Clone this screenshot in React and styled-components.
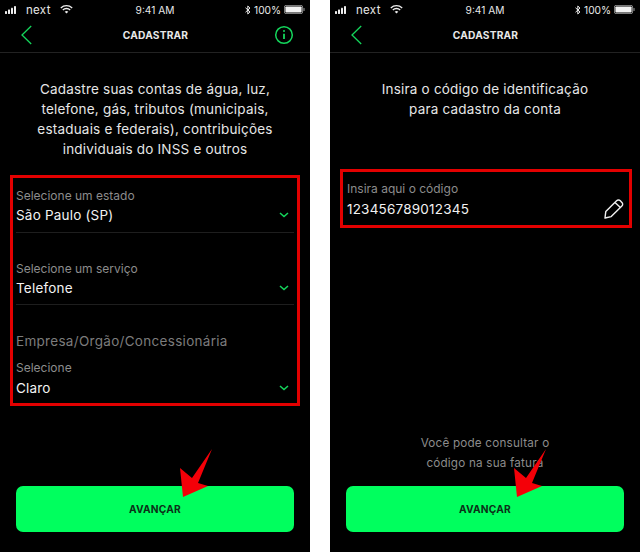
import React from 'react'
import styled, { createGlobalStyle } from 'styled-components'

const GlobalStyle = createGlobalStyle`
  html, body { margin: 0; padding: 0; background: #fff; }
  body { font-family: Inter, "Noto Sans", "Liberation Sans", sans-serif; }
`

const Page = styled.div`
  width: 640px;
  height: 552px;
  display: flex;
  justify-content: space-between;
  overflow: hidden;
`

const Screen = styled.div`
  position: relative;
  width: 310px;
  height: 552px;
  background: #000;
  color: #fff;
  display: flex;
  flex-direction: column;
`

const StatusBar = styled.div`
  height: 18px;
  box-sizing: border-box;
  padding: 1px 5px 0;
  display: flex;
  align-items: center;
  font-size: 10.2px;
  color: #e8e8e8;
`

const StatusLeft = styled.div`
  flex: 1;
  display: flex;
  align-items: center;
  gap: 5px;
`

const Carrier = styled.span`
  font-size: 11.5px;
  letter-spacing: 0.3px;
  margin: 0 4px 0 5px;
`

const Clock = styled.span`
  width: 60px;
  text-align: center;
`

const StatusRight = styled.div`
  flex: 1;
  display: flex;
  align-items: center;
  justify-content: flex-end;
  gap: 3px;
`

const NavBar = styled.div`
  height: 34px;
  padding: 0 16px 0 21px;
  display: flex;
  align-items: center;
  justify-content: space-between;
  border-bottom: 1px solid #222;
`

const NavTitle = styled.div`
  font-size: 10.2px;
  font-weight: 700;
  letter-spacing: 0.2px;
  color: #e8e8e8;
`

const NavSlot = styled.div`
  width: ${p => p.$width}px;
  height: 20px;
  display: flex;
  align-items: center;
`

const Description = styled.p`
  margin: 26px 0 0;
  text-align: center;
  font-size: 13.5px;
  line-height: 20px;
  color: #e6e6e6;
  letter-spacing: 0.2px;
`

const Highlight = styled.div`
  margin: ${p => p.$top}px ${p => p.$right}px 0 10px;
  padding: 3px 3px 3px ${p => p.$inset || 3}px;
  border: 3px solid #e30000;
`

const Field = styled.div`
  padding-top: ${p => p.$pad}px;
  height: ${p => p.$height}px;
  box-sizing: border-box;
  border-bottom: ${p => (p.$last ? 'none' : '1px solid #1e1e1e')};
  margin-bottom: ${p => p.$gap || 0}px;
`

const FieldLabel = styled.div`
  font-size: 12px;
  line-height: 20px;
  margin-bottom: ${p => p.$tight ? -1 : 0}px;
  color: #8c8c8c;
`

const FieldValue = styled.div`
  display: flex;
  align-items: center;
  justify-content: space-between;
  font-size: 13.5px;
  line-height: 20px;
  letter-spacing: 0.2px;
  color: #f2f2f2;
`

const GroupTitle = styled.div`
  font-size: 13.5px;
  line-height: 20px;
  letter-spacing: 0.3px;
  padding-top: 8px;
  color: #7c7c7c;
`

const Chevron = styled.svg`
  width: 10px;
  height: 6px;
  margin-right: 5px;
`

const PencilIcon = styled.svg`
  width: 20px;
  height: 20px;
  margin-right: 2px;
`

const Footer = styled.div`
  margin-top: auto;
  padding: 0 16px 20px;
`

const Hint = styled.p`
  margin: 0 0 13px;
  text-align: center;
  font-size: 11.7px;
  line-height: 20px;
  letter-spacing: 0.2px;
  color: #8c8c8c;
`

const Button = styled.button`
  display: block;
  width: 100%;
  height: 46px;
  border: none;
  border-radius: 7px;
  background: #00ff5e;
  color: #0b3018;
  font-family: inherit;
  font-size: 10.2px;
  font-weight: 700;
  letter-spacing: 0.2px;
`

const Arrow = styled.svg`
  position: absolute;
  left: ${p => p.$left}px;
  top: 449px;
  width: 34px;
  height: 50px;
`

const Signal = () => (
  <svg width="11" height="8" viewBox="0 0 11 8" fill="#eee">
    <rect x="0" y="5" width="2" height="3" rx="0.4" />
    <rect x="3" y="3.5" width="2" height="4.5" rx="0.4" />
    <rect x="6" y="1.8" width="2" height="6.2" rx="0.4" />
    <rect x="9" y="0" width="2" height="8" rx="0.4" />
  </svg>
)

const Wifi = () => (
  <svg width="13" height="9" viewBox="0 0 13 9" fill="none" stroke="#eee" strokeWidth="1.3">
    <path d="M0.8 3a8.2 8.2 0 0 1 11.4 0" />
    <path d="M2.8 5a5.3 5.3 0 0 1 7.4 0" />
    <path d="M6.5 8.6 4.7 6.8a2.6 2.6 0 0 1 3.6 0z" fill="#eee" stroke="none" />
  </svg>
)

const Bluetooth = () => (
  <svg width="6" height="10" viewBox="0 0 6 10" fill="none" stroke="#eee" strokeWidth="1">
    <path d="M0.5 2.8 5 6.9 2.8 9V1L5 3.1.5 7.2" />
  </svg>
)

const Battery = () => (
  <svg width="21" height="9" viewBox="0 0 21 9">
    <rect x="0.4" y="0.4" width="18.2" height="8.2" rx="1.6" fill="none" stroke="#aaa" strokeWidth="0.8" />
    <rect x="1.4" y="1.4" width="16.2" height="6.2" rx="0.8" fill="#f2f2f2" />
    <rect x="19.4" y="3" width="1.2" height="3" rx="0.5" fill="#888" />
  </svg>
)

const BackIcon = () => (
  <svg width="11" height="20" viewBox="0 0 11 20" fill="none" stroke="#14d65c" strokeWidth="1.3">
    <path d="M10.2 1 1 10l9.2 9" />
  </svg>
)

const InfoIcon = () => (
  <svg width="20" height="20" viewBox="0 0 20 20" fill="none" stroke="#14d65c" strokeWidth="1.5">
    <circle cx="10" cy="10" r="8.3" />
    <path d="M10 8.8v5.2" strokeWidth="1.8" />
    <circle cx="10" cy="5.9" r="1" fill="#14d65c" stroke="none" />
  </svg>
)

const Pencil = () => (
  <PencilIcon viewBox="0 0 20 20" fill="none" stroke="#f0f0f0" strokeWidth="1.4" strokeLinejoin="round">
    <path d="M1 19 1.8 12.4 12.6 1.8a2.6 2.6 0 0 1 3.7 0l1.6 1.6a2.6 2.6 0 0 1 0 3.7L7.2 17.6z" />
    <path d="M11 3.4l5.4 5.2" />
  </PencilIcon>
)

const Down = () => (
  <Chevron viewBox="0 0 10 6" fill="none" stroke="#14d65c" strokeWidth="1.5">
    <path d="M1 1l4 3.6L9 1" />
  </Chevron>
)

const RedArrow = ({ left }) => (
  <Arrow $left={left} viewBox="0 0 34 50">
    <path d="M33 0 19 34 29 37 4 48 1 19 13 29z" fill="#f40008" />
  </Arrow>
)

const Status = () => (
  <StatusBar>
    <StatusLeft>
      <Signal />
      <Carrier>next</Carrier>
      <Wifi />
    </StatusLeft>
    <Clock>9:41 AM</Clock>
    <StatusRight>
      <Bluetooth />
      <span>100%</span>
      <Battery />
    </StatusRight>
  </StatusBar>
)

const Nav = ({ info }) => (
  <NavBar>
    <NavSlot $width={16}><BackIcon /></NavSlot>
    <NavTitle>CADASTRAR</NavTitle>
    <NavSlot $width={20}>{info && <InfoIcon />}</NavSlot>
  </NavBar>
)

const App = () => (
  <Page>
    <GlobalStyle />
    <Screen>
      <Status />
      <Nav info />
      <Description>
        Cadastre suas contas de água, luz,<br />
        telefone, gás, tributos (municipais,<br />
        estaduais e federais), contribuições<br />
        individuais do INSS e outros
      </Description>
      <Highlight $top={16} $right={10}>
        <Field $pad={5} $height={52} $gap={21}>
          <FieldLabel $tight>Selecione um estado</FieldLabel>
          <FieldValue>São Paulo (SP)<Down /></FieldValue>
        </Field>
        <Field $pad={5} $height={51} $gap={18}>
          <FieldLabel $tight>Selecione um serviço</FieldLabel>
          <FieldValue>Telefone<Down /></FieldValue>
        </Field>
        <GroupTitle>Empresa/Orgão/Concessionária</GroupTitle>
        <Field $pad={7} $height={49} $last>
          <FieldLabel>Selecione</FieldLabel>
          <FieldValue>Claro<Down /></FieldValue>
        </Field>
      </Highlight>
      <Footer>
        <Button>AVANÇAR</Button>
      </Footer>
      <RedArrow left={179} />
    </Screen>
    <Screen>
      <Status />
      <Nav />
      <Description>
        Insira o código de identificação<br />
        para cadastro da conta
      </Description>
      <Highlight $top={50} $right={8} $inset={4}>
        <Field $pad={4} $height={47} $last>
          <FieldLabel>Insira aqui o código</FieldLabel>
          <FieldValue>123456789012345<Pencil /></FieldValue>
        </Field>
      </Highlight>
      <Footer>
        <Hint>
          Você pode consultar o<br />
          código na sua fatura
        </Hint>
        <Button>AVANÇAR</Button>
      </Footer>
      <RedArrow left={183} />
    </Screen>
  </Page>
)

export default App
